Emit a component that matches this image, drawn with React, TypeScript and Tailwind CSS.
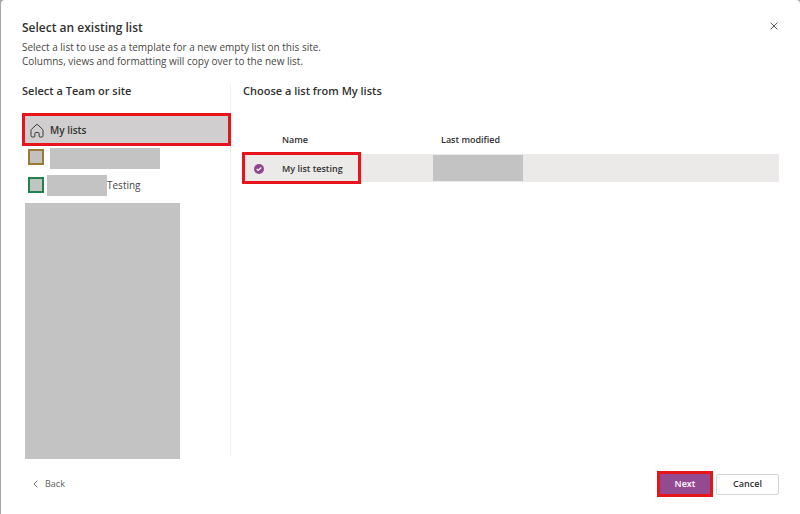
import React from "react";

function HomeIcon() {
  return (
    <svg width="14" height="14" viewBox="0 0 14 14" fill="none" stroke="#3b3a39" strokeWidth="1" strokeLinejoin="round" aria-hidden="true">
      <path d="M6.100 .9a1.300 1.300 0 0 1 1.800 0l4.700 4.500c.3.3.4.6.4 1v5.400c0 .8-.4 1.200-1.100 1.200h-1.800c-.7 0-1-.4-1-1V9.300c0-.5-.3-.8-.8-.8H5.700c-.5 0-.8.3-.8.8V12c0 .6-.3 1-1 1H2.100C1.400 13 1 12.600 1 11.800V6.400c0-.4.1-.7.4-1z" />
    </svg>
  );
}

function CloseIcon() {
  return (
    <svg width="8" height="8" viewBox="0 0 8 8" stroke="#555" strokeWidth="1" aria-hidden="true">
      <path d="M.6.6l6.800 6.800M7.400.6L.6 7.400" />
    </svg>
  );
}

function ChevronLeft() {
  return (
    <svg width="5" height="8" viewBox="0 0 5 8" fill="none" stroke="#666" strokeWidth="0.900" aria-hidden="true">
      <path d="M4.300.7L1 4l3.300 3.300" />
    </svg>
  );
}

function Sites() {
  return (
    <section className="flex w-[209px] shrink-0 flex-col border-r border-[#f0f0f0]">
      <h2 className="text-[11px] leading-[14px] font-semibold text-[#323130]">Select a Team or site</h2>
      <button className="mt-[15px] -mr-px flex h-[33px] items-center gap-[6px] border-[3px] border-[#e8141c] bg-[#d0cece] pt-[2px] pl-[5px] text-left text-[10px] font-semibold text-[#323130]">
        <HomeIcon />
        My lists
      </button>
      <ul className="mt-[2px] flex flex-col gap-[6px] text-[10px] text-[#484644]">
        <li>
          <button aria-label="Team site" className="flex h-[21px] items-start pt-px pl-[6px]">
            <span className="size-4 border-2 border-[#9c7a35] bg-[#c3c1bd]" />
            <span className="-mt-px ml-[6px] h-[21px] w-[110px] bg-[#c3c3c3]" />
          </button>
        </li>
        <li>
          <button className="flex h-[21px] items-start pl-[6px]">
            <span className="mt-[2px] size-4 border-2 border-[#23804f] bg-[#c0c6c2]" />
            <span className="ml-[3px] h-[21px] w-[60px] bg-[#c3c3c3]" />
            <span className="leading-[21px]">Testing</span>
          </button>
        </li>
      </ul>
      <div className="mt-[7px] mb-[-3px] ml-[3px] h-[256px] w-[155px] bg-[#c3c3c3]" />
    </section>
  );
}

function Lists() {
  return (
    <section className="min-w-0 flex-1 pl-[12px]">
      <h2 className="text-[11px] leading-[14px] font-semibold text-[#323130]">Choose a list from My lists</h2>
      <table className="mt-[28px] w-full table-fixed border-collapse text-left text-[9px] text-[#323130]">
        <thead>
          <tr className="h-[28px]">
            <th className="w-[190px] p-0 pl-[39px] font-semibold">Name</th>
            <th className="p-0 pl-[8px] font-semibold">Last modified</th>
          </tr>
        </thead>
        <tbody>
          <tr className="h-[28px] bg-[#ebeae9]">
            <td className="p-0 pl-px">
              <label className="flex h-[28px] w-[115px] items-center gap-[18px] pt-px pl-[10px] font-semibold outline-[3px] outline-offset-[-1px] outline-[#e8141c]">
                <span className="grid size-[10px] place-items-center">
                  <input type="radio" name="list" defaultChecked className="col-start-1 row-start-1 size-[10px] appearance-none rounded-full bg-[#8f458d]" />
                  <svg className="pointer-events-none col-start-1 row-start-1" width="6" height="6" viewBox="0 0 6 6" fill="none" stroke="#fff" strokeWidth="1.200" aria-hidden="true">
                    <path d="M.7 3l1.500 1.500L5.300 1.500" />
                  </svg>
                </span>
                My list testing
              </label>
            </td>
            <td className="p-0">
              <div className="h-[26px] w-[90px] bg-[#c3c3c3]" />
            </td>
          </tr>
        </tbody>
      </table>
    </section>
  );
}

export default function App() {
  return (
    <div className="min-h-screen bg-[#a6a6a6] font-['Open_Sans','Noto_Sans',sans-serif]">
      <main className="ml-px flex min-h-screen flex-col rounded-t-[4px] bg-white pt-[19px] pr-[21px] pl-[21px]">
        <header className="flex items-start justify-between">
          <div>
            <h1 className="text-[12px] leading-[18px] font-semibold text-[#323130]">Select an existing list</h1>
            <p className="mt-[3px] text-[10px] leading-[14px] text-[#484644]">
              Select a list to use as a template for a new empty list on this site.
              <br />
              Columns, views and formatting will copy over to the new list.
            </p>
          </div>
          <button aria-label="Close" className="mt-[3px] mr-px">
            <CloseIcon />
          </button>
        </header>
        <div className="mt-[16px] flex">
          <Sites />
          <Lists />
        </div>
        <footer className="mt-[15px] flex items-center justify-between text-[9px]">
          <button className="flex items-center gap-[7px] pl-[11px] text-[#605e5c]">
            <ChevronLeft />
            Back
          </button>
          <div className="flex items-center gap-[3px] font-semibold">
            <button className="h-[26px] w-[56px] border-[3px] border-[#e8141c] bg-[#944a90] text-white">Next</button>
            <button className="h-[21px] w-[63px] rounded-[2px] border border-[#d4d4d4] bg-white text-[#323130]">Cancel</button>
          </div>
        </footer>
      </main>
    </div>
  );
}
